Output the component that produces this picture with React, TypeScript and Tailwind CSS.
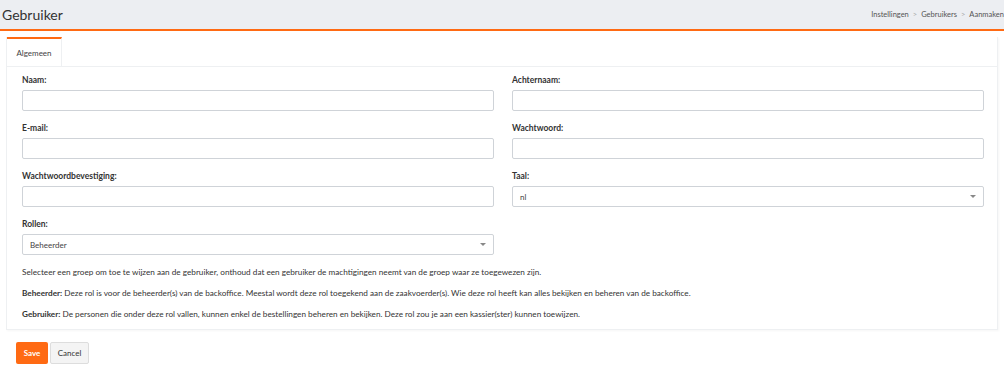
import React from 'react';

function Field({ label, children }: { label: string; children: React.ReactNode }) {
  return (
    <div className="mb-[11px]">
      <div className="mb-[4px] text-[8.5px] font-bold leading-[12px] text-[#333]">{label}</div>
      {children}
    </div>
  );
}

function TextInput() {
  return <div className="h-[21px] rounded-[2px] border border-[#cfd3d8] bg-white" />;
}

function Select({ value }: { value: string }) {
  return (
    <div className="flex h-[21px] items-center justify-between rounded-[2px] border border-[#cfd3d8] bg-white pl-[7px] pr-[7px]">
      <span className="text-[8px] text-[#444]">{value}</span>
      <span className="h-0 w-0 border-x-[3px] border-t-[3px] border-x-transparent border-t-[#888]" />
    </div>
  );
}

export default function App() {
  return (
    <div className="min-h-screen overflow-hidden bg-white font-['Lato',sans-serif] text-[#333]">
      <header className="flex h-[31px] items-center justify-between border-b-2 border-[#ff6a13] bg-[#eceef2] pl-[2px]">
        <h1 className="text-[14px] leading-none text-[#333]">Gebruiker</h1>
        <div className="flex items-center gap-[4px] text-[7.5px] text-[#555]">
          <span>Instellingen</span>
          <span className="text-[#aaa]">&gt;</span>
          <span>Gebruikers</span>
          <span className="text-[#aaa]">&gt;</span>
          <span>Aanmaken</span>
        </div>
      </header>

      <main className="px-[6px] pt-[6px]">
        <div className="border-l border-r border-b border-[#eef0f2] shadow-[1px_1px_2px_rgba(0,0,0,0.04)]">
          <div className="flex border-b border-[#eef0f2]">
            <div className="flex h-[29px] w-[55px] items-center justify-center border-t-2 border-r border-t-[#ff6a13] border-r-[#eef0f2] text-[8px] text-[#444]">
              Algemeen
            </div>
          </div>
          <div className="pb-[9px] pl-[15px] pr-[13px] pt-[7px]">
            <div className="grid grid-cols-2 gap-x-[18px]">
              <Field label="Naam:"><TextInput /></Field>
              <Field label="Achternaam:"><TextInput /></Field>
              <Field label="E-mail:"><TextInput /></Field>
              <Field label="Wachtwoord:"><TextInput /></Field>
              <Field label="Wachtwoordbevestiging:"><TextInput /></Field>
              <Field label="Taal:"><Select value="nl" /></Field>
              <Field label="Rollen:"><Select value="Beheerder" /></Field>
            </div>
            <div className="text-[8.2px] leading-[12px] text-[#333]">
              <p className="mb-[9px]">
                Selecteer een groep om toe te wijzen aan de gebruiker, onthoud dat een gebruiker de machtigingen neemt van de groep waar ze toegewezen zijn.
              </p>
              <p className="mb-[9px]">
                <b>Beheerder:</b> Deze rol is voor de beheerder(s) van de backoffice. Meestal wordt deze rol toegekend aan de zaakvoerder(s). Wie deze rol heeft kan alles bekijken en beheren van de backoffice.
              </p>
              <p>
                <b>Gebruiker:</b> De personen die onder deze rol vallen, kunnen enkel de bestellingen beheren en bekijken. Deze rol zou je aan een kassier(ster) kunnen toewijzen.
              </p>
            </div>
          </div>
        </div>

        <div className="ml-[10px] mt-[12px] flex gap-[2px]">
          <button className="h-[22px] w-[32px] rounded-[2px] bg-[#ff6a13] text-[8px] font-bold text-white">Save</button>
          <button className="h-[22px] w-[39px] rounded-[2px] border border-[#ddd] bg-[#f4f4f4] text-[8px] text-[#333]">Cancel</button>
        </div>
      </main>
    </div>
  );
}
